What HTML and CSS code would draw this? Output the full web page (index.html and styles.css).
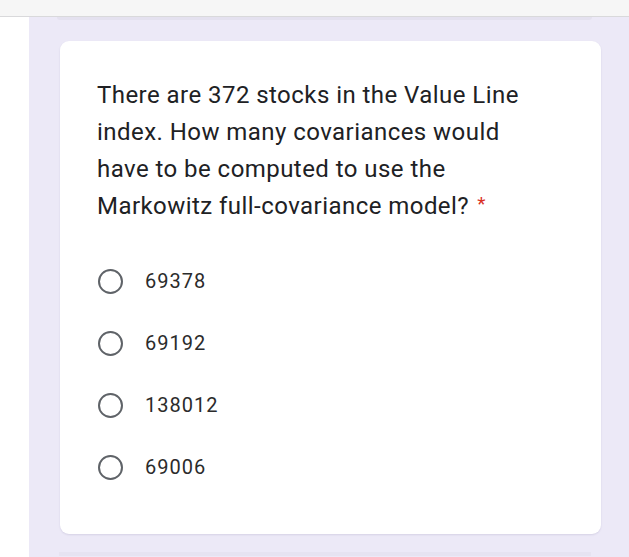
FILE: index.html
```html
<!DOCTYPE html>
<html>
<head>
<meta charset="utf-8">
<link rel="stylesheet" href="styles.css">
</head>
<body>
<div class="topbar"></div>
<div class="page">
  <div class="prev-card"></div>
  <div class="card">
    <div class="question">There are 372 stocks in the Value Line index. How many covariances would have to be computed to use the Markowitz full-covariance model?<span class="req">*</span></div>
    <div class="options">
      <div class="option"><span class="radio"></span><span class="label">69378</span></div>
      <div class="option"><span class="radio"></span><span class="label">69192</span></div>
      <div class="option"><span class="radio"></span><span class="label">138012</span></div>
      <div class="option"><span class="radio"></span><span class="label">69006</span></div>
    </div>
  </div>
  <div class="next-card"></div>
</div>
</body>
</html>
```
FILE: styles.css
```css
html, body {
  margin: 0;
  padding: 0;
  background: #ffffff;
  height: 557px;
  overflow: hidden;
}
body {
  font-family: Roboto, "Open Sans", Arial, sans-serif;
  color: #202124;
}
.topbar {
  height: 16px;
  background: #f6f6f6;
  border-bottom: 1px solid #d9d9db;
}
.page {
  margin-left: 29px;
  background: #ece9f7;
  height: 540px;
  display: flex;
  flex-direction: column;
}
.prev-card {
  height: 3px;
  margin: 0 37px 0 28px;
  background: #e4e1ef;
  border-radius: 0 0 6px 6px;
}
.card {
  margin: 21px 0 0 31px;
  width: 541px;
  height: 493px;
  box-sizing: border-box;
  background: #ffffff;
  border-radius: 9px;
  box-shadow: 0 1px 2px rgba(60, 50, 110, 0.12);
  padding: 36px 20px 0 37px;
}
.question {
  width: 445px;
  font-size: 24px;
  line-height: 37px;
  letter-spacing: 0.45px;
}
.req {
  display: inline-block;
  color: #d93025;
  font-size: 19px;
  line-height: 14px;
  margin-left: 8px;
  vertical-align: 4px;
}
.options {
  margin-top: 43px;
  display: flex;
  flex-direction: column;
  gap: 36px;
}
.option {
  display: flex;
  align-items: center;
  height: 26px;
}
.radio {
  width: 21px;
  height: 21px;
  border: 2.5px solid #5f6368;
  border-radius: 50%;
  margin-left: 1px;
}
.label {
  margin-left: 22px;
  font-size: 20px;
  letter-spacing: 1px;
  color: #2b2b2b;
}
.next-card {
  margin: 18px 38px 0 30px;
  height: 4px;
  background: #e6e3f1;
}
```
